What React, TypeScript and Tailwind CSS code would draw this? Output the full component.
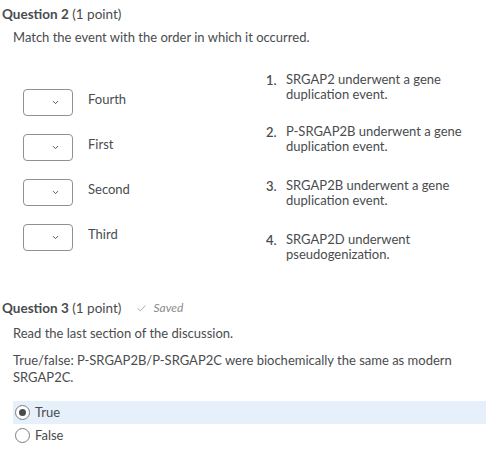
import { ChevronDown, Check } from "lucide-react";

// order picker rows on the left, numbered events on the right
const picks = ["Fourth", "First", "Second", "Third"];
const events = [
  "SRGAP2 underwent a gene duplication event.",
  "P-SRGAP2B underwent a gene duplication event.",
  "SRGAP2B underwent a gene duplication event.",
  "SRGAP2D underwent pseudogenization.",
];

function SelectBox() {
  return (
    <div className="w-[50px] h-[27px] border border-[#8f9193] rounded-[4px] bg-white flex items-center justify-end pr-[12px]">
      <ChevronDown className="w-[9px] h-[9px] text-[#494c4e]" strokeWidth={2.5} />
    </div>
  );
}

function Radio({ on }: { on?: boolean }) {
  return (
    <div className="w-[15px] h-[15px] rounded-full border border-[#7a7c7e] bg-white flex items-center justify-center">
      {on && <div className="w-[7px] h-[7px] rounded-full bg-[#494c4e]" />}
    </div>
  );
}

export default function App() {
  return (
    <div className="w-[486px] h-[464px] bg-white text-[#494c4e] text-[13px] leading-[17px] font-['Lato',sans-serif] overflow-hidden">
      {/* Question 2 */}
      <div className="pl-[2px] pt-[5px] text-[13.5px] leading-[18px]">
        <span className="font-bold">Question 2</span> (1 point)
      </div>
      <p className="pl-[13px] mt-[6px]">Match the event with the order in which it occurred.</p>

      <div className="flex mt-[26px]">
        <div className="flex flex-col gap-[18px] pl-[23px] pt-[17px] w-[266px]">
          {picks.map((p) => (
            <div key={p} className="flex items-start gap-[15px]">
              <SelectBox />
              <span className="pt-[2px]">{p}</span>
            </div>
          ))}
        </div>
        <ol className="flex flex-col w-[200px] leading-[15px]">
          {events.map((e, i) => (
            <li key={i} className={"flex " + (i === 0 ? "" : i === 1 ? "mt-[22px]" : "mt-[24px]")}>
              <span className="w-[20px] shrink-0 font-semibold pt-[1px]">{i + 1}.</span>
              <span>{e}</span>
            </li>
          ))}
        </ol>
      </div>

      {/* Question 3 */}
      <div className="flex items-center pl-[2px] mt-[37px] text-[13.5px] leading-[18px]">
        <span>
          <span className="font-bold">Question 3</span> (1 point)
        </span>
        <span className="flex items-center ml-[15px] text-[12px] italic text-[#8a8c8e]">
          <Check className="w-[11px] h-[11px] mr-[6px] text-[#a0a2a4]" strokeWidth={2} />
          Saved
        </span>
      </div>
      <p className="pl-[13px] mt-[8px]">Read the last section of the discussion.</p>
      <p className="pl-[13px] pr-[20px] mt-[10px]">
        True/false: P-SRGAP2B/P-SRGAP2C were biochemically the same as modern SRGAP2C.
      </p>

      <div className="mt-[15px] ml-[13px]">
        <div className="flex items-center gap-[5px] h-[23px] bg-[#e6f0fa] pl-[2px]">
          <Radio on />
          <span>True</span>
        </div>
        <div className="flex items-center gap-[5px] h-[22px] pl-[2px]">
          <Radio />
          <span>False</span>
        </div>
      </div>
    </div>
  );
}
